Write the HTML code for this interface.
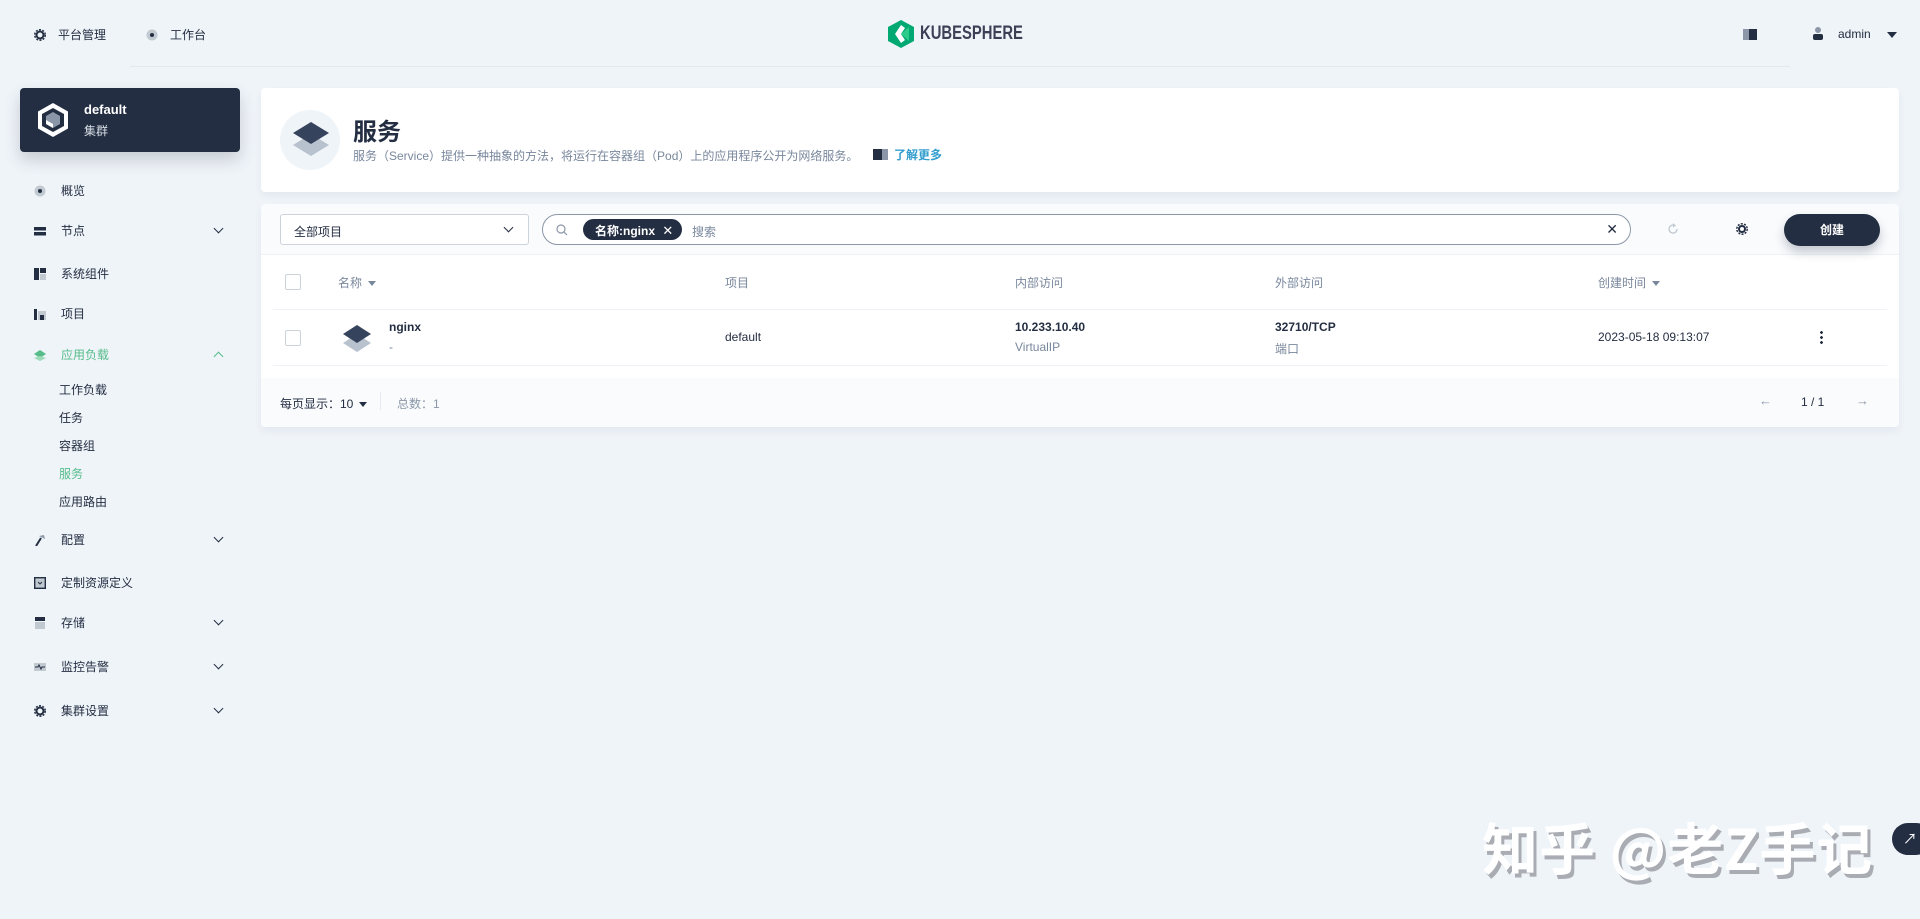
<!DOCTYPE html>
<html><head><meta charset="utf-8"><style>
*{box-sizing:border-box;margin:0;padding:0}
body{width:1920px;height:919px;background:#eff4f9;font-family:"Liberation Sans","Noto Sans CJK SC",sans-serif;font-size:12px;color:#242e42;position:relative;overflow:hidden}
.abs{position:absolute}
.nav{left:34px;top:26px;display:flex;align-items:center;gap:8px;font-size:12px}
.sep{left:130px;right:130px;top:66px;height:1px;background:#e3e9ef}
.card{background:#fff;border-radius:4px;box-shadow:0 4px 8px rgba(36,46,66,.06)}
.side{left:34px;display:flex;align-items:center;width:188px;font-size:12px;color:#242e42}
.side .ic{width:12px;height:12px;margin-right:15px;display:inline-block}
.side .ch{margin-left:auto;width:7px;height:7px;border-right:1.5px solid #242e42;border-bottom:1.5px solid #242e42;transform:rotate(45deg);margin-top:-4px}
.sub{left:59px;font-size:12px;color:#242e42}
.th{top:274px;color:#79879c;font-size:12px}
.caret{display:inline-block;width:0;height:0;border-left:4px solid transparent;border-right:4px solid transparent;border-top:5px solid #79879c;margin-left:6px;vertical-align:middle}
</style></head><body>
<div class="abs nav"><svg width="12" height="12" viewBox="0 0 12 12"><circle cx="6" cy="6" r="3.5" fill="none" stroke="#242e42" stroke-width="2"/><circle cx="6" cy="6" r="5.3" fill="none" stroke="#242e42" stroke-width="1.4" stroke-dasharray="2 1.4"/></svg><span style="margin-left:4px">平台管理</span></div>
<div class="abs nav" style="left:146px"><svg width="12" height="12"><circle cx="6" cy="6" r="5.5" fill="#c1c9d1"/><circle cx="6" cy="6" r="2" fill="#242e42"/></svg><span style="margin-left:4px">工作台</span></div>
<div class="abs" style="left:888px;top:20px;display:flex;align-items:center;gap:6px">
<svg width="26" height="28" viewBox="0 0 26 28"><polygon points="13,0 26,7 26,21 13,28 0,21 0,7" fill="#00a971"/><polygon points="13,5 7,14 13,23 17,20 13,14 17,8" fill="#fff"/><polygon points="13,14 21,7 21,21" fill="#3ad591" opacity=".8"/></svg>
<span style="font-size:19px;font-weight:bold;color:#3d3f55;display:inline-block;transform:scaleX(.78);transform-origin:left center">KUBESPHERE</span></div>
<div class="abs" style="left:1743px;top:29px;width:14px;height:11px;background:#242e42;border-left:6px solid #8b97a8"></div>
<div class="abs" style="left:1813px;top:26px;width:10px;height:14px"><svg width="10" height="14"><circle cx="5" cy="4" r="3" fill="#8b97a8"/><rect x="0" y="8" width="10" height="6" rx="2" fill="#242e42"/></svg></div>
<div class="abs" style="left:1838px;top:27px;font-size:12px">admin</div>
<div class="abs" style="left:1887px;top:32px;border-left:5px solid transparent;border-right:5px solid transparent;border-top:6px solid #242e42"></div>
<div class="abs sep"></div>
<div class="abs" style="left:20px;top:88px;width:220px;height:64px;background:#242e42;border-radius:4px;box-shadow:0 8px 16px rgba(36,46,66,.2)">
<svg class="abs" style="left:16px;top:14px" width="34" height="36" viewBox="0 0 34 36"><polygon points="17,1 32,9.5 32,26.5 17,35 2,26.5 2,9.5" fill="#fff"/><polygon points="17,6 28,12 28,24 17,30 6,24 6,12" fill="#242e42"/><polygon points="17,10 24,14 24,22 17,26 10,22 10,14" fill="#8b97a8"/><polygon points="10,18 17,22 17,26 10,22" fill="#fff"/></svg>
<div class="abs" style="left:64px;top:14px;color:#fff;font-weight:bold;font-size:13px">default</div>
<div class="abs" style="left:64px;top:34px;color:#d8dee5;font-size:12px">集群</div></div>
<div class="abs side" style="top:182px"><svg class="ic" viewBox="0 0 12 12"><circle cx="6" cy="6" r="5.5" fill="#c1c9d1"/><circle cx="6" cy="6" r="2" fill="#242e42"/></svg>概览</div>
<div class="abs side" style="top:222px"><svg class="ic" viewBox="0 0 12 12"><rect y="2" width="12" height="3.5" fill="#242e42"/><rect y="7" width="12" height="3.5" fill="#242e42"/></svg>节点<i class="ch"></i></div>
<div class="abs side" style="top:265px"><svg class="ic" viewBox="0 0 12 12"><rect width="5" height="12" fill="#242e42"/><rect x="6" width="6" height="5" fill="#242e42"/><rect x="6" y="6" width="6" height="6" fill="#c1c9d1"/></svg>系统组件</div>
<div class="abs side" style="top:305px"><svg class="ic" viewBox="0 0 12 12"><rect y="1" width="3" height="11" fill="#242e42"/><rect x="4" y="3" width="8" height="9" fill="#c1c9d1"/><rect x="6" y="7" width="4" height="5" fill="#242e42"/></svg>项目</div>
<div class="abs side" style="top:346px;color:#55bc8a"><svg class="ic" viewBox="0 0 12 12"><polygon points="6,1 12,5 6,9 0,5" fill="#55bc8a"/><polygon points="6,7 12,9 6,12 0,9" fill="#9ddbb9"/></svg>应用负载<i class="ch" style="transform:rotate(225deg);margin-top:4px;border-color:#55bc8a"></i></div>
<div class="abs sub" style="top:381px">工作负载</div>
<div class="abs sub" style="top:409px">任务</div>
<div class="abs sub" style="top:437px">容器组</div>
<div class="abs sub" style="top:465px;color:#55bc8a">服务</div>
<div class="abs sub" style="top:493px">应用路由</div>
<div class="abs side" style="top:531px"><svg class="ic" viewBox="0 0 12 12"><path d="M2 12 L7 4" stroke="#242e42" stroke-width="2"/><path d="M5 2 L10 1 L11 5 Z" fill="#8b97a8"/></svg>配置<i class="ch"></i></div>
<div class="abs side" style="top:574px"><svg class="ic" viewBox="0 0 12 12"><rect x=".7" y=".7" width="10.6" height="10.6" fill="#c1c9d1" stroke="#242e42" stroke-width="1.4"/><path d="M4 5 L6 7 L8 5" stroke="#242e42" fill="none"/></svg>定制资源定义</div>
<div class="abs side" style="top:614px"><svg class="ic" viewBox="0 0 12 12"><rect x="1" width="10" height="4" fill="#242e42"/><rect x="1" y="5" width="10" height="7" fill="#c1c9d1"/></svg>存储<i class="ch"></i></div>
<div class="abs side" style="top:658px"><svg class="ic" viewBox="0 0 12 12"><rect y="2" width="12" height="8" fill="#c1c9d1"/><path d="M1 6 H4 L5 4 L7 8 L8 6 H11" stroke="#242e42" fill="none"/></svg>监控告警<i class="ch"></i></div>
<div class="abs side" style="top:702px"><svg class="ic" viewBox="0 0 12 12"><circle cx="6" cy="6" r="3.5" fill="none" stroke="#242e42" stroke-width="2"/><circle cx="6" cy="6" r="5.3" fill="none" stroke="#242e42" stroke-width="1.4" stroke-dasharray="2 1.4"/></svg>集群设置<i class="ch"></i></div>
<div class="abs card" style="left:261px;top:88px;width:1638px;height:104px">
<div class="abs" style="left:19px;top:22px;width:60px;height:60px;border-radius:50%;background:#eff4f9"></div>
<svg class="abs" style="left:32px;top:32px" width="36" height="40" viewBox="0 0 36 40"><polygon points="18,14 36,25 18,36 0,25" fill="#b8c2ce"/><polygon points="18,2 36,13 18,24 0,13" fill="#36435c"/></svg>
<div class="abs" style="left:92px;top:24px;font-size:24px;font-weight:bold">服务</div>
<div class="abs" style="left:92px;top:59px;font-size:12px;color:#79879c">服务（Service）提供一种抽象的方法，将运行在容器组（Pod）上的应用程序公开为网络服务。</div>
<div class="abs" style="left:612px;top:61px;width:15px;height:11px;background:#242e42;border-right:6px solid #8b97a8"></div>
<div class="abs" style="left:633px;top:58px;font-size:12px;color:#329dce;font-weight:bold">了解更多</div>
</div>
<div class="abs card" style="left:261px;top:204px;width:1638px;height:223px;overflow:hidden">
<div class="abs" style="left:0;top:0;width:100%;height:51px;background:#f9fbfd;border-bottom:1px solid #eef2f6"></div>
<div class="abs" style="left:19px;top:10px;width:249px;height:31px;border:1px solid #ccd3db;border-radius:3px;background:#fff"><span class="abs" style="left:13px;top:8px">全部项目</span><i class="abs" style="right:16px;top:9px;width:7px;height:7px;border-right:1.3px solid #242e42;border-bottom:1.3px solid #242e42;transform:rotate(45deg)"></i></div>
<div class="abs" style="left:281px;top:10px;width:1089px;height:31px;border:1px solid #8b97a8;border-radius:16px;background:#fff">
<svg class="abs" style="left:13px;top:9px" width="12" height="12"><circle cx="5" cy="5" r="4" fill="none" stroke="#8b97a8" stroke-width="1.2"/><path d="M8 8 L11 11" stroke="#8b97a8" stroke-width="1.2"/></svg>
<div class="abs" style="left:40px;top:4px;height:21px;width:99px;border-radius:11px;background:#242e42;color:#fff;font-weight:bold;padding:3px 0 0 12px">名称:nginx <span style="margin-left:4px;font-weight:normal;font-size:13px">✕</span></div>
<span class="abs" style="left:149px;top:8px;color:#79879c">搜索</span>
<span class="abs" style="right:12px;top:6px;font-size:14px">✕</span></div>
<svg class="abs" style="left:1406px;top:19px" width="12" height="12"><path d="M10 6 A4 4 0 1 1 7 2.2" fill="none" stroke="#c1c9d1" stroke-width="1.3"/><path d="M6 0 L9 2.5 L6 4.5 Z" fill="#c1c9d1"/></svg>
<svg class="abs" style="left:1475px;top:19px" width="12" height="12"><circle cx="6" cy="6" r="3" fill="none" stroke="#242e42" stroke-width="2"/><circle cx="6" cy="6" r="5.2" fill="none" stroke="#242e42" stroke-width="1.5" stroke-dasharray="2 1.3"/></svg>
<div class="abs" style="left:1523px;top:10px;width:96px;height:32px;border-radius:16px;background:#242e42;color:#fff;font-weight:bold;text-align:center;line-height:32px;box-shadow:0 6px 10px rgba(36,46,66,.25)">创建</div>
<div class="abs" style="left:24px;top:70px;width:16px;height:16px;border:1px solid #ccd3db;border-radius:2px;background:#fff"></div>
<div class="abs th" style="left:77px;top:70px">名称<i class="caret"></i></div>
<div class="abs th" style="left:464px;top:70px">项目</div>
<div class="abs th" style="left:754px;top:70px">内部访问</div>
<div class="abs th" style="left:1014px;top:70px">外部访问</div>
<div class="abs th" style="left:1337px;top:70px">创建时间<i class="caret"></i></div>
<div class="abs" style="left:12px;top:105px;width:1614px;height:1px;background:#eef2f6"></div>
<div class="abs" style="left:24px;top:126px;width:16px;height:16px;border:1px solid #ccd3db;border-radius:2px;background:#fff"></div>
<svg class="abs" style="left:80px;top:119px" width="32" height="32" viewBox="0 0 32 32"><polygon points="16,11 30,20 16,29 2,20" fill="#b8c2ce"/><polygon points="16,2 30,11 16,20 2,11" fill="#36435c"/></svg>
<div class="abs" style="left:128px;top:116px;font-weight:bold">nginx</div>
<div class="abs" style="left:128px;top:136px;color:#79879c">-</div>
<div class="abs" style="left:464px;top:126px">default</div>
<div class="abs" style="left:754px;top:116px;font-weight:bold">10.233.10.40</div>
<div class="abs" style="left:754px;top:136px;color:#79879c">VirtualIP</div>
<div class="abs" style="left:1014px;top:116px;font-weight:bold">32710/TCP</div>
<div class="abs" style="left:1014px;top:136px;color:#79879c">端口</div>
<div class="abs" style="left:1337px;top:126px">2023-05-18 09:13:07</div>
<div class="abs" style="left:1559px;top:126px;width:3px;height:14px;background:radial-gradient(circle,#242e42 1.3px,transparent 1.5px) 0 0/3px 5px"></div>
<div class="abs" style="left:12px;top:161px;width:1614px;height:1px;background:#eef2f6"></div>
<div class="abs" style="left:0;top:174px;width:100%;height:49px;background:#f9fbfd"></div>
<div class="abs" style="left:19px;top:191px">每页显示：10<i class="caret" style="border-top-color:#242e42"></i></div>
<div class="abs" style="left:119px;top:188px;width:1px;height:18px;background:#e3e9ef"></div>
<div class="abs" style="left:136px;top:191px;color:#8b97a8">总数：1</div>
<div class="abs" style="left:1498px;top:189px;color:#8b97a8;font-size:13px">←</div>
<div class="abs" style="left:1540px;top:191px">1 / 1</div>
<div class="abs" style="left:1595px;top:189px;color:#8b97a8;font-size:13px">→</div>
</div>
<div class="abs" style="left:1482px;top:806px;font-size:56px;font-weight:bold;color:#fff;text-shadow:3px 4px 0 #a9acb2;letter-spacing:1px;font-family:'Noto Sans CJK SC',sans-serif">知乎 @老Z手记</div>
<div class="abs" style="left:1892px;top:823px;width:40px;height:32px;border-radius:16px;background:#242e42;color:#fff;padding:6px 0 0 11px;font-size:14px">↗</div>
</body></html>
